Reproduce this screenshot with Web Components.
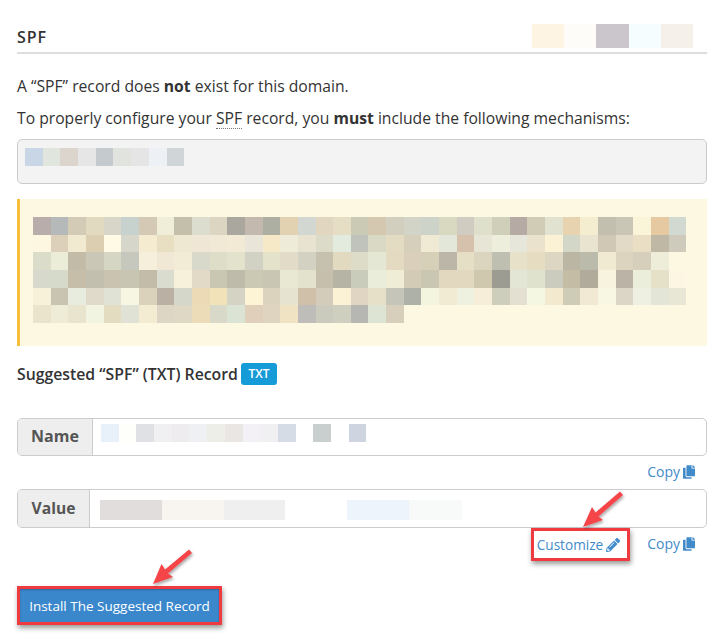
<!DOCTYPE html>
<html><head><meta charset="utf-8">
<style>
html,body{margin:0;padding:0;background:#fff}
body{font-family:"Open Sans","Noto Sans",sans-serif;font-size:15.7px;color:#333;width:724px;height:644px;overflow:hidden;position:relative}
</style></head><body>
<template id="blur-t"><style>
:host{display:grid;grid-auto-rows:var(--h,18px);grid-template-columns:var(--cols);width:max-content}
i{display:block}
</style></template>
<template id="panel-t"><style>
:host{display:block;padding:0 17px}
header{display:flex;justify-content:space-between;align-items:flex-start;height:52px;border-bottom:2px solid #ddd;box-sizing:content-box}
h2{margin:25px 0 0;font-size:16px;line-height:24px;font-weight:600;letter-spacing:.9px;color:#333}
.hb{margin:24px 14px 0 0}
.body{display:block}
</style><header><h2><slot name="title"></slot></h2><div class="hb"><slot name="head"></slot></div></header><div class="body"><slot></slot></div></template>
<template id="notice-t"><style>
:host{display:block;box-sizing:border-box;height:147px;margin-top:15px;background:#fdf8e1;border-left:3px solid #f9bd3e;padding:18px 0 0 13px}
</style><slot></slot></template>
<template id="field-t"><style>
:host{display:flex;box-sizing:border-box;height:var(--fh,38px);border:1px solid #ccc;border-radius:5px;overflow:hidden;background:#fff}
.l{box-sizing:border-box;width:var(--lw,75px);background:#eee;border-right:1px solid #ccc;display:flex;align-items:center;justify-content:center;padding-bottom:2px;font-weight:700;font-size:var(--lf,16px);color:#555}
.v{flex:1;padding:var(--vp,5px 0 0 8px)}
</style><div class="l"><slot name="label"></slot></div><div class="v"><slot></slot></div></template>
<template id="act-t"><style>
:host{display:inline-flex;align-items:center;gap:3px;color:#428bca;font-size:var(--af,14px);line-height:20px;height:20px}
svg{display:block;fill:#428bca}
</style><slot></slot><svg id="s"></svg></template>
<template id="callout-t"><style>
:host{display:inline-flex;align-items:center;box-sizing:border-box;height:33px;border:3px solid #ef3b3f;padding:0 7px 0 3px;box-shadow:1px 3px 5px rgba(0,0,0,.4)}
</style><slot></slot></template>
<spf-panel>
<span slot="title">SPF</span>
<blur-row slot="head" data-w="32.2" data-h="24" data-c="fdf4e3 fdfcf8 cbc6cc f5fdfe f5f1ea"></blur-row>
<p style="margin:21px 0 0;line-height:22px">A “SPF” record does <b>not</b> exist for this domain.</p>
<p style="margin:10px 0 0;line-height:22px">To properly configure your <span style="border-bottom:1px dotted #777;display:inline-block;line-height:19px">SPF</span> record, you <b>must</b> include the following mechanisms:</p>
<div style="box-sizing:border-box;height:45px;margin-top:10px;background:#f3f3f3;border:1px solid #ccc;border-radius:5px;padding:8px 0 0 7px">
<blur-row data-w="17.7" data-h="18" data-c="c9d6e6 e0e5de dcd5ce e6e6e6 c4cacd e1e4de e5e5e5 edf0f4 d0d5d8"></blur-row>
</div>
<spf-notice>
<blur-row data-w="17.66" data-h="17.7" data-n="37" data-c="b8adab b5b9b9 d3cbb6 e1dac1 d8d6c8 c7d1cd d3c9b4 f0edd8 c3bfab dcddcf dcd5c1 aaa79e c3b9af adafa3 e2d2b2 d2d8d1 e1d7c1 e5dec5 cbcab4 d5c8b1 d2cfbe d2d4c8 cdd3c8 d9d8c1 d1ccc1 dfe0cb d0d0ba b5aba4 d1ccb6 e1e2d0 e7d3af f5edd0 c2bfaf c9c6b5 faf5d8 e6c9a0 d1d9d0 fdf6e0 dcd0ba f2ead0 dccfb1 fefae6 d6d7ca f5ebd0 e8dfc3 eee8d3 efe6d6 f1e9d6 f3ead5 e9e5d8 f5e9c8 eeebd9 e8e3d1 dcdbca e3ebdf c0c2bc d9d9c5 e3dcc3 d5cfbb f0ead4 e3e7da d5c1ac e6e5d6 eeeedd e6e6da eae2cd fbf1d5 d2d7c8 e8e4d0 d0c8b4 e2d9c6 eadfc4 bfb8a5 cecbbc dcdccb ecedd9 c1bba8 cbc7b6 d6d6c5 c6c8bd f5efdc f0e8d5 f2ecd6 d8d9cb deddc8 e3e2cd d2d2c4 e4e2cb e2dbc8 d3d1c1 c5c1ae e1d9c0 dcdcc8 e5e7d5 e3dac1 d9cfbb d6d0b8 bbb6a8 e5dfc5 dbd5c0 bfbfb1 e7e1c9 e5dcc1 dcd6c2 bbb6a3 bbbbab f0ead3 dcd4bf d6cfbb eeedd9 fdf8e1 d6d9cc d6dacb c7bea9 c2bfaf c9c3b0 c9c5b3 c3bca8 dadccf f7f1dc e2dac6 c9c6b2 bfbbab cbc8b4 c9c7b3 e9e8d2 e3e2cd c6bfac b6b5a5 c9cbbb e9edda efedd6 d3cbb5 c9c7b2 e2d7bf e2d8c0 d0c7af 9c9c92 e3e6d4 dfe2cc ccccbe c5bca6 b1ab9c f7f3df bcb3a7 eaeedb e5e1c9 fcf6e2 f8f1da c9c4b2 e8ecde e0dacb dfe2d5 f6f6e2 dbd2bc bab1a4 d5d7ca ebdab5 f2e2b9 d5d4c4 fdf3d5 dcd3be e6e4d0 d0bfa9 d4ccbb fbf1d5 e0d5c3 e7e0c8 c5c5b9 aeb1a7 f3f5df f1ebd3 eff1e0 f6eed8 cecebd e3e0d1 f4f7e2 f3e9ce cecbb6 f2e9d5 f8f7e4 dcd6c6 eef1e1 e3e5d6 e8e7d5 ebe4cd eeecd6 e9e4cd f2f4e2 e4dcc0 dfe2d5 f3ecd3 ddd6c4 dfd8c5 ecdcb8 d9d9c9 dbe3d4 e0d0bb dfd4bf f0e3c4 bebdb9 cacbbd cecfbf b6b7b2 dee4d4 d7cfbc"></blur-row>
</spf-notice>
<div style="margin-top:17px;display:flex;align-items:center;gap:3px;font-weight:600;font-size:15.8px;line-height:22px;height:22px;color:#333">Suggested “SPF” (TXT) Record <span style="display:inline-block;background:#169bd9;color:#fff;font-size:12px;font-weight:600;line-height:22px;height:22px;border-radius:3px;box-sizing:border-box;width:36px;text-align:center">TXT</span></div>
<spf-field style="margin-top:33px;--lw:75px;--fh:38px;--vp:5px 0 0 8px"><span slot="label">Name</span>
<blur-row data-w="17.7" data-h="18" data-c="e8f1fa fefffa dfe1e5 f0f0f3 eeecef eef0f4 eeeee8 e9e6e3 f3f1f5 f0f0f2 d5dce6 ffffff c9cfcf ffffff ced5e1"></blur-row></spf-field>
<div style="display:flex;justify-content:flex-end;align-items:flex-start;padding-right:12px;height:33px;padding-top:6px;box-sizing:border-box"><spf-action data-i="copy">Copy</spf-action></div>
<spf-field style="--lw:72px;--fh:39px;--vp:10px 0 0 10px;--lf:15.6px"><span slot="label">Value</span>
<blur-row data-ws="62 62 61 62 62 53" data-h="20" data-c="e1dddc f8f4f0 efefef ffffff eef4fb f8f9f9"></blur-row></spf-field>
<div style="display:flex;justify-content:flex-end;align-items:flex-start;gap:17px;padding-right:12px;height:58px;box-sizing:border-box">
<spf-callout><spf-action data-i="pencil" style="--af:13.6px">Customize</spf-action></spf-callout>
<spf-action data-i="copy" style="margin-top:6px">Copy</spf-action></div>
<spf-button>Install The Suggested Record</spf-button>
</spf-panel>
<svg style="position:absolute;left:0;top:0;pointer-events:none" width="724" height="644" viewBox="0 0 724 644">
<defs><filter id="sh" x="-30%" y="-30%" width="160%" height="160%"><feDropShadow dx="1" dy="2" stdDeviation="1.5" flood-color="#000" flood-opacity=".35"/></filter></defs>
<g filter="url(#sh)" fill="#f5444a">
<path d="M583 527 L592 507 L595.5 512.5 L620 491.5 L623 495 L598.5 516.5 L603 520Z"/>
<path d="M153 584 L161.5 564 L165 569.5 L189 549.5 L192 553 L168 573.5 L173 577Z"/></g>
</svg>
<script>
function tpl(id){return document.getElementById(id).content.cloneNode(true)}
class Base extends HTMLElement{constructor(){super();this.attachShadow({mode:'open'}).appendChild(tpl(this.constructor.t))}}
class SpfPanel extends Base{static t='panel-t'}
class SpfNotice extends Base{static t='notice-t'}
class SpfField extends Base{static t='field-t'}
class SpfCallout extends Base{static t='callout-t'}
class BlurRow extends Base{static t='blur-t';
connectedCallback(){const c=this.dataset.c.split(' '),n=this.dataset.n||c.length;
const cols=this.dataset.ws?this.dataset.ws.split(' ').map(x=>x+'px').join(' '):'repeat('+n+','+this.dataset.w+'px)';
this.style.setProperty('--cols',cols);this.style.setProperty('--h',this.dataset.h+'px');
for(const x of c){const i=document.createElement('i');i.style.background='#'+x;this.shadowRoot.appendChild(i)}}}
const ICONS={copy:['0 0 448 512',"M320 448v40c0 13.255-10.745 24-24 24H24c-13.255 0-24-10.745-24-24V120c0-13.255 10.745-24 24-24h72v296c0 30.879 25.121 56 56 56h168zm0-344V0H152c-13.255 0-24 10.745-24 24v368c0 13.255 10.745 24 24 24h272c13.255 0 24-10.745 24-24V128H344c-13.2 0-24-10.8-24-24zm120.971-31.029L375.029 7.029A24 24 0 0 0 358.059 0H352v96h96v-6.059a24 24 0 0 0-7.029-16.97z"],
pencil:['0 0 512 512',"M497.9 142.1l-46.1 46.1c-4.7 4.7-12.3 4.7-17 0l-111-111c-4.7-4.7-4.7-12.3 0-17l46.1-46.1c18.7-18.7 49.1-18.7 67.9 0l60.1 60.1c18.8 18.7 18.8 49.1 0 67.9zM284.2 99.8L21.6 362.4.4 483.9c-2.9 16.4 11.4 30.6 27.8 27.8l121.5-21.3 262.6-262.6c4.7-4.7 4.7-12.3 0-17l-111-111c-4.8-4.7-12.4-4.7-17.1 0zM124.1 339.9c-5.5-5.5-5.5-14.3 0-19.8l154-154c5.5-5.5 14.3-5.5 19.8 0s5.5 14.3 0 19.8l-154 154c-5.5 5.5-14.3 5.5-19.8 0zM88 424h48v36.3l-64.5 11.3-31.1-31.1L51.7 376H88v48z"]};
class SpfAction extends Base{static t='act-t';
connectedCallback(){const [vb,d]=ICONS[this.dataset.i],s=this.shadowRoot.getElementById('s');
s.setAttribute('viewBox',vb);s.setAttribute('width',this.dataset.i=='copy'?12:14);s.setAttribute('height',14);
s.innerHTML='<path d="'+d+'"/>'}}
class SpfButton extends HTMLElement{constructor(){super();this.attachShadow({mode:'open'}).innerHTML='<style>:host{display:inline-flex;align-items:center;justify-content:center;box-sizing:border-box;width:205px;height:39px;background:#3a87cc;color:#fff;font-size:13.5px;border:3px solid #ef3b3f;box-shadow:1px 3px 5px rgba(0,0,0,.4),inset 0 1px 2px rgba(0,0,0,.25)}</style><slot></slot>'}}
customElements.define('spf-panel',SpfPanel);customElements.define('spf-notice',SpfNotice);customElements.define('spf-field',SpfField);customElements.define('spf-callout',SpfCallout);customElements.define('blur-row',BlurRow);customElements.define('spf-action',SpfAction);customElements.define('spf-button',SpfButton);
</script>
</body></html>
